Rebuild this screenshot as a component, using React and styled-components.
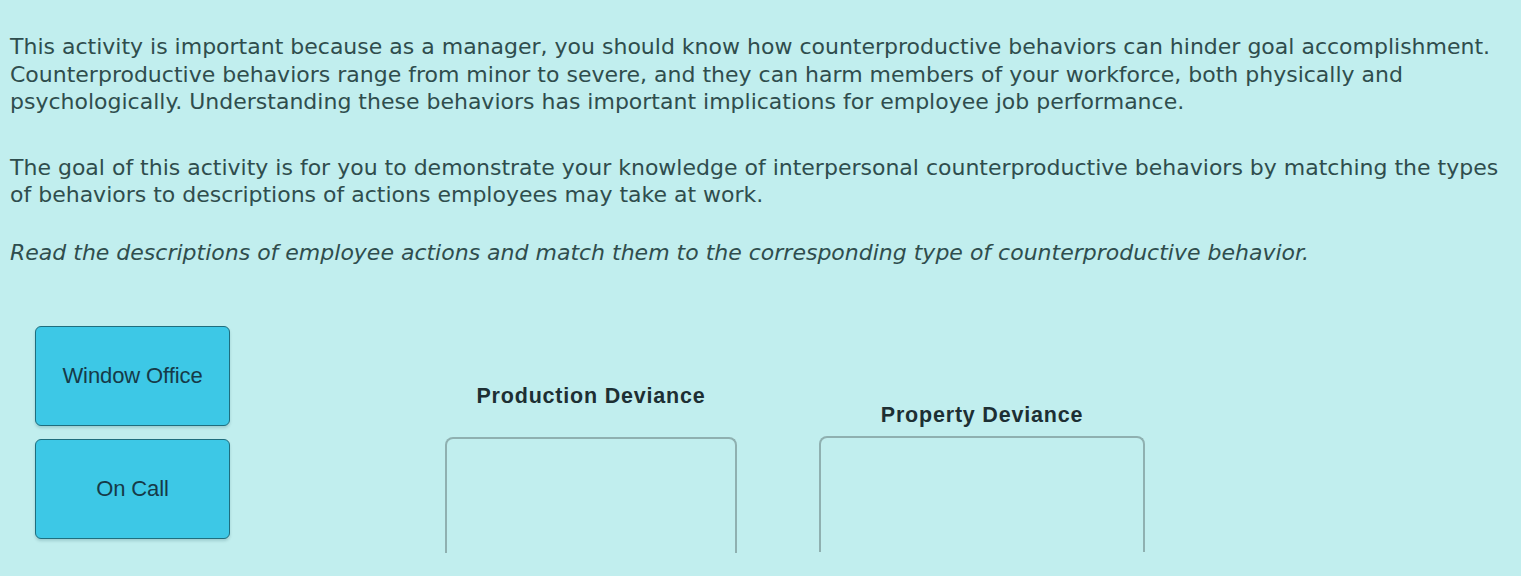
import React from "react";
import styled, { createGlobalStyle } from "styled-components";

const Global = createGlobalStyle`
  html, body { margin: 0; padding: 0; }
  body {
    background: #c1eeee;
    width: 1521px;
    height: 576px;
    overflow: hidden;
  }
`;

const Page = styled.div`
  padding: 33px 0 0 10px;
  color: #2f4d4d;
  font-family: "DejaVu Sans", sans-serif;
`;

const Para = styled.p`
  margin: 0 0 ${(p) => p.$gap}px 0;
  font-size: 22px;
  line-height: 27.5px;
  font-style: ${(p) => (p.$italic ? "italic" : "normal")};
  white-space: nowrap;
`;

const Activity = styled.div`
  display: flex;
  align-items: flex-start;
  margin-top: 60px;
  padding-left: 25px;
`;

const Bank = styled.div`
  display: flex;
  flex-direction: column;
  gap: 13px;
  width: 195px;
`;

const Card = styled.div`
  box-sizing: border-box;
  height: 100px;
  display: flex;
  align-items: center;
  justify-content: center;
  background: #3dc8e6;
  border: 1.5px solid #1f6e7e;
  border-radius: 6px;
  box-shadow: 0 2px 3px rgba(0, 60, 70, 0.18);
  color: #163a48;
  font-family: "Liberation Sans", Arial, sans-serif;
  font-size: 22px;
  letter-spacing: -0.1px;
`;

const Target = styled.div`
  display: flex;
  flex-direction: column;
  align-items: center;
  width: ${(p) => p.$w}px;
  margin-left: ${(p) => p.$ml}px;
  padding-top: ${(p) => p.$pt}px;
`;

const Title = styled.div`
  font-family: "Liberation Sans", Arial, sans-serif;
  font-weight: bold;
  font-size: 21.5px;
  line-height: 22px;
  letter-spacing: 0.8px;
  color: #1d2f33;
  margin-bottom: ${(p) => p.$mb}px;
`;

const Drop = styled.div`
  box-sizing: border-box;
  width: 100%;
  height: 116px;
  border: 2px solid #8fb0b0;
  border-bottom: none;
  border-radius: 8px 8px 0 0;
`;

export default function App() {
  return (
    <>
      <Global />
      <Page>
        <Para $gap={38}>
          This activity is important because as a manager, you should know how counterproductive behaviors can hinder goal accomplishment.
          <br />
          Counterproductive behaviors range from minor to severe, and they can harm members of your workforce, both physically and
          <br />
          psychologically. Understanding these behaviors has important implications for employee job performance.
        </Para>
        <Para $gap={30}>
          The goal of this activity is for you to demonstrate your knowledge of interpersonal counterproductive behaviors by matching the types
          <br />
          of behaviors to descriptions of actions employees may take at work.
        </Para>
        <Para $gap={0} $italic>
          Read the descriptions of employee actions and match them to the corresponding type of counterproductive behavior.
        </Para>
        <Activity>
          <Bank>
            <Card>Window Office</Card>
            <Card>On Call</Card>
          </Bank>
          <Target $w={292} $ml={215} $pt={59}>
            <Title $mb={30}>Production Deviance</Title>
            <Drop />
          </Target>
          <Target $w={326} $ml={82} $pt={78}>
            <Title $mb={10}>Property Deviance</Title>
            <Drop />
          </Target>
        </Activity>
      </Page>
    </>
  );
}
